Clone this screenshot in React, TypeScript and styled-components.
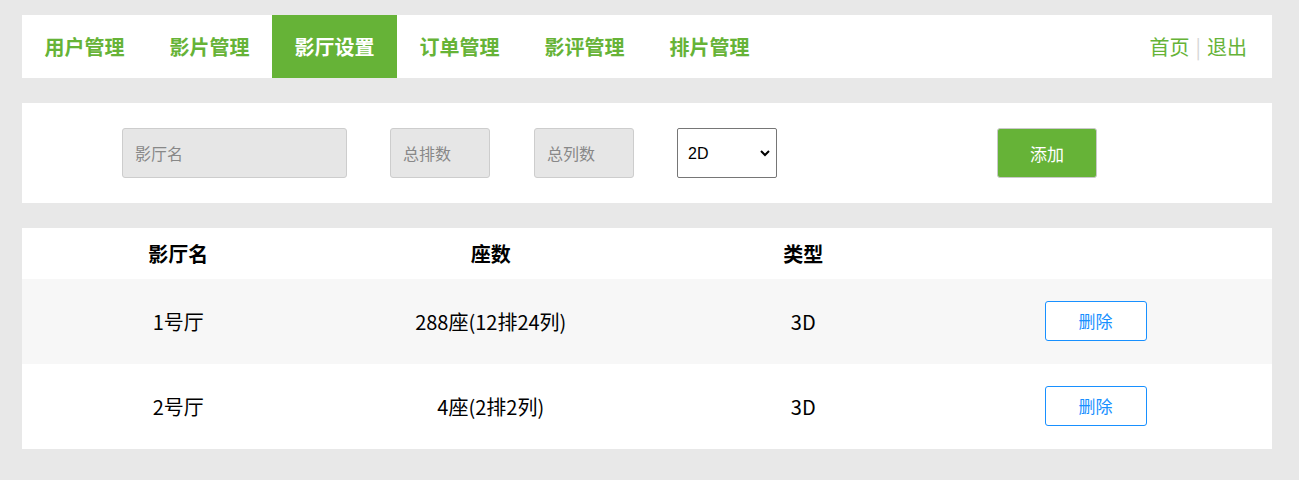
import React from "react";
import styled, { createGlobalStyle } from "styled-components";

const Global = createGlobalStyle`
  html, body { margin: 0; padding: 0; background: #e8e8e8; }
  body { font-family: "Microsoft YaHei", "Noto Sans CJK SC", "Noto Sans", sans-serif; }
  * { box-sizing: border-box; }
`;

const GREEN = "#66b337";

const Page = styled.div`
  padding: 15px 27px 30px 22px;
  display: flex;
  flex-direction: column;
  gap: 25px;
`;

const NavBar = styled.nav`
  height: 63px;
  background: #fff;
  display: flex;
  align-items: stretch;
`;

const Tab = styled.a<{ $active?: boolean }>`
  width: 125px;
  display: flex;
  align-items: center;
  justify-content: center;
  font-size: 20px;
  font-weight: bold;
  color: ${(p) => (p.$active ? "#fff" : GREEN)};
  background: ${(p) => (p.$active ? GREEN : "transparent")};
  cursor: pointer;
`;

const Spacer = styled.div`
  flex: 1;
`;

const RightLinks = styled.div`
  display: flex;
  align-items: center;
  padding-right: 25px;
  font-size: 20px;
  color: ${GREEN};
  gap: 6px;
`;

const Sep = styled.span`
  color: #d6d6d6;
`;

const FormPanel = styled.div`
  height: 100px;
  background: #fff;
  display: flex;
  align-items: center;
  padding-left: 100px;
`;

const TextInput = styled.input<{ $w: number; $ml?: number }>`
  width: ${(p) => p.$w}px;
  height: 50px;
  margin-left: ${(p) => p.$ml ?? 0}px;
  background: #e6e6e6;
  border: 1px solid #cdcdcd;
  border-radius: 3px;
  padding: 0 12px;
  font-family: inherit;
  font-size: 16px;
  color: #333;
  outline: none;
  &::placeholder { color: #888; }
`;

const SelectWrap = styled.div`
  position: relative;
  margin-left: 43px;
  width: 100px;
  height: 50px;
`;

const Select = styled.select`
  appearance: none;
  width: 100%;
  height: 100%;
  border: 1px solid #767676;
  border-radius: 2px;
  background: #fff;
  padding: 0 10px;
  font-family: "Liberation Sans", Arial, sans-serif;
  font-size: 16px;
  color: #000;
  outline: none;
`;

const Chevron = styled.svg`
  position: absolute;
  right: 6px;
  top: 19px;
  pointer-events: none;
`;

const AddButton = styled.button`
  margin-left: 220px;
  width: 100px;
  height: 50px;
  background: ${GREEN};
  border: 1px solid #c9c9c9;
  border-radius: 3px;
  color: #fff;
  font-family: inherit;
  font-size: 17px;
`;

const Table = styled.div`
  background: #fff;
  display: flex;
  flex-direction: column;
`;

const Row = styled.div<{ $h: number; $bg?: string }>`
  height: ${(p) => p.$h}px;
  background: ${(p) => p.$bg ?? "#fff"};
  display: grid;
  grid-template-columns: 312.5px 312.5px 312.5px 1fr;
  align-items: center;
`;

const HeadCell = styled.div`
  text-align: center;
  font-size: 20px;
  font-weight: bold;
  color: #000;
`;

const Cell = styled.div`
  text-align: center;
  font-size: 20px;
  color: #000;
`;

const ActionCell = styled.div`
  padding-left: 85px;
  display: flex;
`;

const DeleteButton = styled.button`
  width: 102px;
  height: 40px;
  margin-top: -2px;
  background: #fff;
  border: 1px solid #1890ff;
  border-radius: 3px;
  color: #1890ff;
  font-family: inherit;
  font-size: 17px;
`;

const tabs = ["用户管理", "影片管理", "影厅设置", "订单管理", "影评管理", "排片管理"];

const halls = [
  { name: "1号厅", seats: "288座(12排24列)", type: "3D", bg: "#f7f7f7" },
  { name: "2号厅", seats: "4座(2排2列)", type: "3D", bg: "#fff" },
];

export default function App() {
  return (
    <>
      <Global />
      <Page>
        <NavBar>
          {tabs.map((t) => (
            <Tab key={t} $active={t === "影厅设置"}>
              {t}
            </Tab>
          ))}
          <Spacer />
          <RightLinks>
            <span>首页</span>
            <Sep>|</Sep>
            <span>退出</span>
          </RightLinks>
        </NavBar>

        <FormPanel>
          <TextInput $w={225} placeholder="影厅名" />
          <TextInput $w={100} $ml={43} placeholder="总排数" />
          <TextInput $w={100} $ml={44} placeholder="总列数" />
          <SelectWrap>
            <Select defaultValue="2D">
              <option value="2D">2D</option>
              <option value="3D">3D</option>
            </Select>
            <Chevron width="12" height="12" viewBox="0 0 12 12">
              <path d="M2 4 L6 8 L10 4" fill="none" stroke="#000" strokeWidth="2" />
            </Chevron>
          </SelectWrap>
          <AddButton>添加</AddButton>
        </FormPanel>

        <Table>
          <Row $h={51}>
            <HeadCell>影厅名</HeadCell>
            <HeadCell>座数</HeadCell>
            <HeadCell>类型</HeadCell>
            <HeadCell />
          </Row>
          {halls.map((h) => (
            <Row key={h.name} $h={85} $bg={h.bg}>
              <Cell>{h.name}</Cell>
              <Cell>{h.seats}</Cell>
              <Cell>{h.type}</Cell>
              <ActionCell>
                <DeleteButton>删除</DeleteButton>
              </ActionCell>
            </Row>
          ))}
        </Table>
      </Page>
    </>
  );
}
